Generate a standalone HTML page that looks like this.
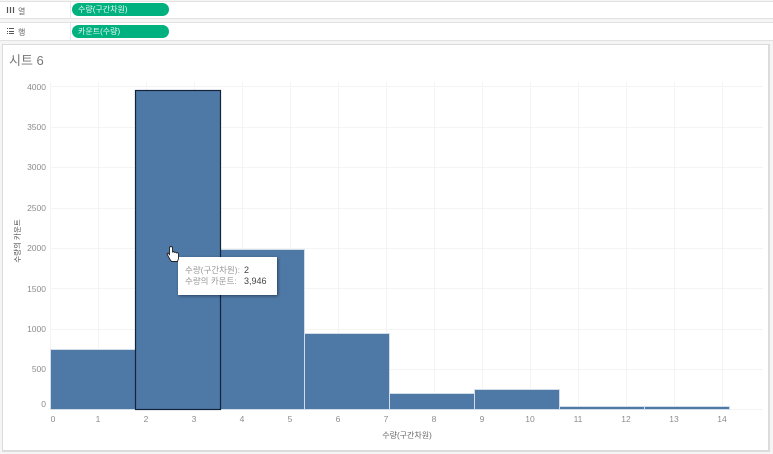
<!DOCTYPE html>
<html>
<head>
<meta charset="utf-8">
<style>
html,body{margin:0;padding:0;background:#f5f5f5;}
body{width:773px;height:454px;overflow:hidden;position:relative;font-family:"Liberation Sans","Noto Sans CJK KR",sans-serif;}
.shelf{position:absolute;left:0;width:773px;height:16px;background:#fff;border:1px solid #e2e2e2;border-width:1px 0;}
.shelf .div{position:absolute;left:70px;top:0;width:1px;height:100%;background:#e8e8e8;}
.lbl{position:absolute;left:18px;top:4px;font-size:8px;color:#666;}
.pill{position:absolute;left:72px;width:97px;height:13px;border-radius:7px;background:#00b180;color:#e8f8f2;font-size:8px;line-height:13px;text-indent:6px;white-space:nowrap;}
.panel{position:absolute;left:2px;top:44px;width:765px;height:405px;background:#fff;border:1px solid #dcdcdc;border-width:1px 2px 2px 1px;}
.title{position:absolute;left:9px;top:53px;font-size:13px;color:#777;line-height:16px;}
.tip{position:absolute;left:178px;top:257px;width:99px;height:38px;background:#fff;box-shadow:1px 1px 3px rgba(0,0,0,.45);font-size:8.5px;line-height:11px;color:#999;}
.tip span{position:absolute;white-space:nowrap;}
.tip b{font-weight:normal;color:#444;position:absolute;left:59px;top:0;white-space:nowrap;font-size:9px;}
svg{position:absolute;left:0;top:0;}
</style>
</head>
<body>
<div class="shelf" style="top:1px"><div class="div"></div><div class="lbl">열</div></div>
<div class="shelf" style="top:22px;height:17px"><div class="div"></div><div class="lbl">행</div></div>
<div class="pill" style="top:3px">수량(구간차원)</div>
<div class="pill" style="top:25px">카운트(수량)</div>
<div class="panel"></div>
<div class="title">시트 6</div>
<svg width="773" height="454" viewBox="0 0 773 454">
  <g stroke="#555" stroke-width="1" fill="none">
    <path d="M7.500 7v6M10.500 7v6M13.500 7v6" stroke-width="1.2"/>
    <path d="M9 28.500h5M9 31.500h5M9 33.500h5"/>
    <path d="M7 28.500h1M7 31.500h1M7 33.500h1"/>
  </g>
  <g stroke="#f4f4f4" stroke-width="1">
    <path d="M50.500 82V409M98.500 82V409M146.500 82V409M194.500 82V409M242.500 82V409M290.500 82V409M338.500 82V409M386.500 82V409M434.500 82V409M482.500 82V409M530.500 82V409M578.500 82V409M626.500 82V409M674.500 82V409M722.500 82V409"/>
    <path d="M50 86.500H763M50 127.500H763M50 167.500H763M50 208.500H763M50 248.500H763M50 288.500H763M50 329.500H763M50 369.500H763M50 409.500H763"/>
  </g>
  <g fill="#4e79a7" stroke="#d3dde8" stroke-width="1">
    <rect x="50.500" y="349.500" width="85" height="60"/>
    <rect x="219.500" y="249.500" width="85" height="160"/>
    <rect x="304.500" y="333.500" width="85" height="76"/>
    <rect x="389.500" y="393.500" width="85" height="16"/>
    <rect x="474.500" y="389.500" width="85" height="20"/>
    <rect x="559.500" y="406.500" width="85" height="3"/>
    <rect x="644.500" y="406.500" width="85" height="3"/>
  </g>
  <rect x="135.500" y="90.500" width="85" height="319" fill="#4e79a7" stroke="#12233a" stroke-width="1.200"/>
  <g font-family="Liberation Sans, sans-serif" font-size="8.500" fill="#8c8c8c" text-anchor="end">
    <text x="46" y="90">4000</text>
    <text x="46" y="130">3500</text>
    <text x="46" y="170">3000</text>
    <text x="46" y="211">2500</text>
    <text x="46" y="251">2000</text>
    <text x="46" y="292">1500</text>
    <text x="46" y="332">1000</text>
    <text x="46" y="372">500</text>
    <text x="46" y="407">0</text>
  </g>
  <g font-family="Liberation Sans, sans-serif" font-size="8.500" fill="#8c8c8c" text-anchor="middle">
    <text x="53" y="422">0</text>
    <text x="98" y="422">1</text>
    <text x="146" y="422">2</text>
    <text x="194" y="422">3</text>
    <text x="242" y="422">4</text>
    <text x="290" y="422">5</text>
    <text x="338" y="422">6</text>
    <text x="386" y="422">7</text>
    <text x="434" y="422">8</text>
    <text x="482" y="422">9</text>
    <text x="530" y="422">10</text>
    <text x="578" y="422">11</text>
    <text x="626" y="422">12</text>
    <text x="674" y="422">13</text>
    <text x="722" y="422">14</text>
  </g>
  <text x="407" y="438" font-family="Liberation Sans, Noto Sans CJK KR, sans-serif" font-size="8" fill="#666" text-anchor="middle">수량(구간차원)</text>
  <text transform="translate(20,241) rotate(-90)" font-family="Liberation Sans, Noto Sans CJK KR, sans-serif" font-size="7.500" fill="#555" text-anchor="middle">수량의 카운트</text>
</svg>
<div class="tip">
  <span style="left:7px;top:8px">수량(구간차원):<b>2</b></span>
  <span style="left:7px;top:19px">수량의 카운트:<b>3,946</b></span>
</div>
<svg width="773" height="454" viewBox="0 0 773 454">
  <path d="M169.500 247.500v7l-1.500-1.500-1 1 3 5.500 1.500 2h6l1-3v-5l-1-1-1 .500-1-1-1 .500-1-1-1 .500v-4.500q-.5-1-1.500-1t-1.500 1z" fill="#fff" stroke="#222" stroke-width=".9"/>
</svg>
</body>
</html>
